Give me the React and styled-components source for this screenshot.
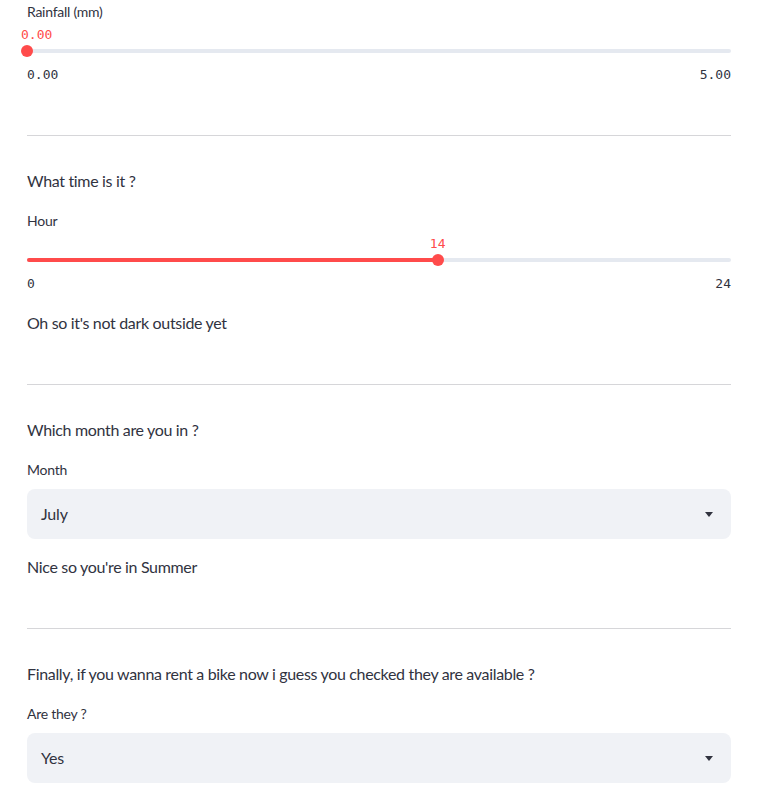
import React from "react";
import styled, { createGlobalStyle } from "styled-components";

const GlobalStyle = createGlobalStyle`
  html, body {
    margin: 0;
    padding: 0;
    background: #ffffff;
  }
  body {
    font-family: Lato, "Noto Sans", sans-serif;
    color: rgb(49, 51, 63);
  }
`;

const RED = "rgb(255, 75, 75)";

const Page = styled.div`
  width: 704px;
  padding: 0 29px 0 27px;
  display: flex;
  flex-direction: column;
  gap: 16px;
`;

const Divider = styled.hr`
  margin: 33px 0 17px;
  border: none;
  border-bottom: 1px solid rgba(49, 51, 63, 0.2);
  height: 0;
`;

const Text = styled.p`
  margin: 0;
  font-size: 16px;
  line-height: 24px;
  letter-spacing: -0.33px;
`;

const Label = styled.div`
  font-size: 14px;
  line-height: 24px;
  letter-spacing: -0.25px;
  margin-bottom: ${(p) => p.$gap || 0}px;
`;

const Widget = styled.div`
  display: flex;
  flex-direction: column;
`;

const Mono = `"DejaVu Sans Mono", "Liberation Mono", monospace`;

const ValueRow = styled.div`
  position: relative;
  height: 21px;
`;

const Value = styled.span`
  position: absolute;
  top: 0;
  font-family: ${Mono};
  font-size: 13px;
  line-height: 21px;
  color: ${RED};
`;

const TrackArea = styled.div`
  position: relative;
  height: 12px;
  display: flex;
  align-items: center;
`;

const Track = styled.div`
  flex: 1;
  height: 4px;
  border-radius: 2px;
  background: rgb(229, 233, 240);
  overflow: hidden;
  display: flex;
`;

const Fill = styled.div`
  height: 100%;
  background: ${RED};
`;

const Thumb = styled.div`
  position: absolute;
  top: 0;
  width: 12px;
  height: 12px;
  border-radius: 50%;
  background: ${RED};
  transform: translateX(-50%);
`;

const Ticks = styled.div`
  display: flex;
  justify-content: space-between;
  margin-top: 7px;
  font-family: ${Mono};
  font-size: 13px;
  line-height: 22px;
`;

const SelectBox = styled.div`
  height: 50px;
  box-sizing: border-box;
  border-radius: 8px;
  background: rgb(240, 242, 246);
  display: flex;
  align-items: center;
  justify-content: space-between;
  padding: 0 18px 2px 14px;
  font-size: 16px;
  letter-spacing: -0.2px;
`;

const Caret = styled.svg`
  width: 8px;
  height: 5px;
  margin-top: 2px;
  fill: rgb(49, 51, 63);
`;

function Slider({ label, min, max, value, fmt }) {
  const pct = ((value - min) / (max - min)) * 100;
  // value label is centred over the thumb, but kept from running off the left edge
  const shift = pct === 0 ? "translateX(-6px)" : "translateX(-50%)";
  return (
    <Widget>
      <Label>{label}</Label>
      <ValueRow>
        <Value style={{ left: `${pct}%`, transform: shift }}>{fmt(value)}</Value>
      </ValueRow>
      <TrackArea>
        <Track>
          <Fill style={{ width: `${pct}%` }} />
        </Track>
        <Thumb style={{ left: `${pct}%` }} />
      </TrackArea>
      <Ticks>
        <span>{fmt(min)}</span>
        <span>{fmt(max)}</span>
      </Ticks>
    </Widget>
  );
}

function Select({ label, value }) {
  return (
    <Widget>
      <Label $gap={7}>{label}</Label>
      <SelectBox>
        <span>{value}</span>
        <Caret viewBox="0 0 8 5">
          <path d="M0 0h8L4 5z" />
        </Caret>
      </SelectBox>
    </Widget>
  );
}

export default function App() {
  return (
    <>
      <GlobalStyle />
      <Page>
        <Slider label="Rainfall (mm)" min={0} max={5} value={0} fmt={(v) => v.toFixed(2)} />
        <Divider />
        <Text>What time is it ?</Text>
        <Slider label="Hour" min={0} max={24} value={14} fmt={(v) => String(v)} />
        <Text>Oh so it's not dark outside yet</Text>
        <Divider />
        <Text>Which month are you in ?</Text>
        <Select label="Month" value="July" />
        <Text>Nice so you're in Summer</Text>
        <Divider />
        <Text>Finally, if you wanna rent a bike now i guess you checked they are available ?</Text>
        <Select label="Are they ?" value="Yes" />
      </Page>
    </>
  );
}
